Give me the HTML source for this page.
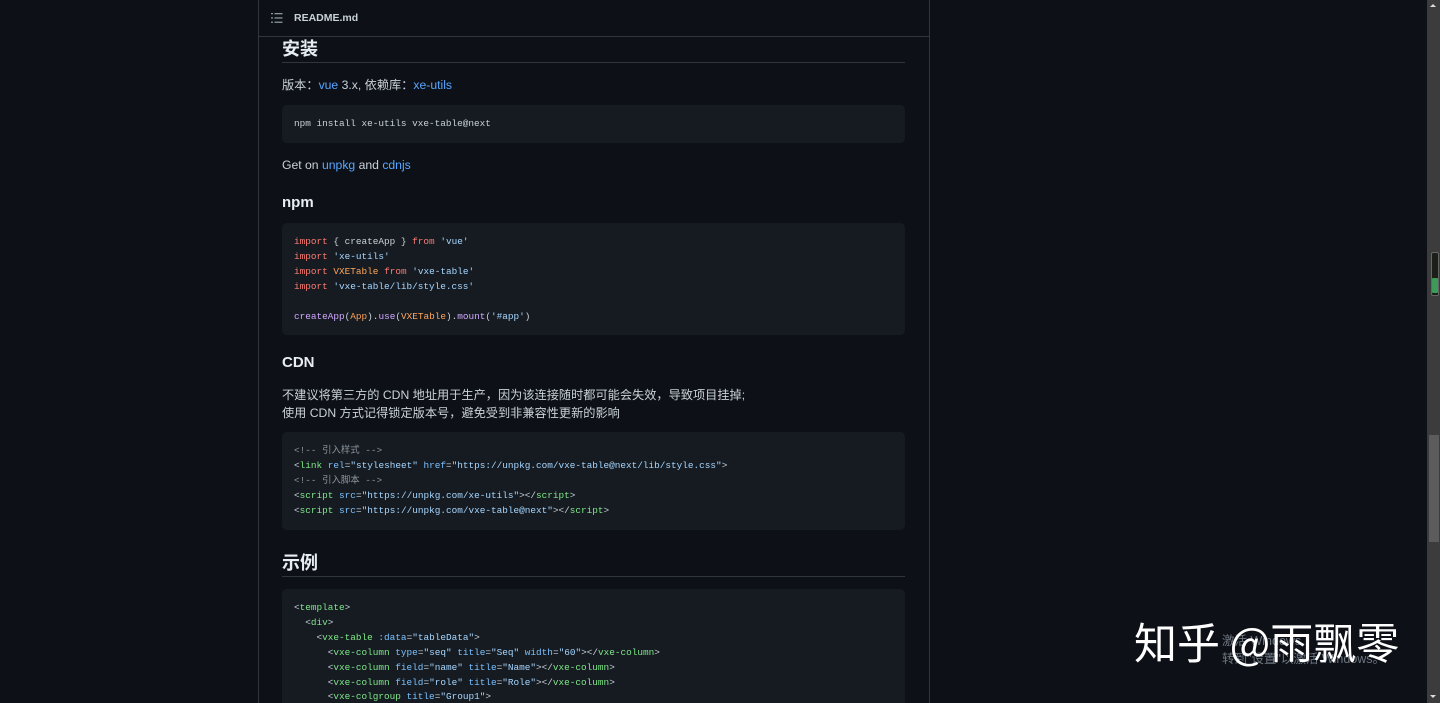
<!DOCTYPE html>
<html><head><meta charset="utf-8"><style>
html,body{margin:0;padding:0;overflow:hidden;height:703px;}
body{width:1440px;background:#0d1117;position:relative;font-family:"Liberation Sans","Noto Sans CJK SC",sans-serif;color:#c9d1d9;}
.box{position:absolute;left:258px;top:-2px;width:670px;height:705px;border-left:1px solid #30363d;border-right:1px solid #30363d;}
.hdr{position:absolute;left:259px;top:0;width:670px;height:36px;border-bottom:1px solid #30363d;}
.hdr .t{position:absolute;left:35px;top:12px;font-size:10.5px;font-weight:bold;color:#c9d1d9;}
.a{position:absolute;white-space:nowrap;}
.h1{font-size:18px;font-weight:bold;color:#e6edf3;}
.h2{font-size:15px;font-weight:bold;color:#e6edf3;}
.rule{position:absolute;left:282px;width:623px;height:1px;background:#30363d;}
.p{font-size:12.2px;color:#c9d1d9;}
.l{color:#58a6ff;}
.code{position:absolute;left:282px;width:623px;background:#161b22;border-radius:5px;}
pre{margin:0;position:absolute;left:12px;font-family:"Liberation Mono","Noto Sans CJK SC",monospace;font-size:9.4px;line-height:14.9px;color:#c9d1d9;}
.k{color:#ff7b72}.s{color:#a5d6ff}.f{color:#d2a8ff}.o{color:#ffa657}.c{color:#8b949e}.g{color:#7ee787}.at{color:#79c0ff}
.sb{position:absolute;left:1427px;top:0;width:13px;height:703px;background:#3c3c3c;}
</style></head><body>
<div class="box"></div>
<div class="hdr">
<svg style="position:absolute;left:12px;top:13px" width="12" height="10" viewBox="0 0 12 10"><g fill="#8b949e"><rect x="0" y="0" width="2" height="1.3"/><rect x="0" y="4.3" width="2" height="1.3"/><rect x="0" y="8.6" width="2" height="1.3"/><rect x="3.5" y="0" width="8" height="1.3"/><rect x="3.5" y="4.3" width="8" height="1.3"/><rect x="3.5" y="8.6" width="8" height="1.3"/></g></svg>
<div class="t">README.md</div></div>

<div class="a h1" style="left:282px;top:35px">安装</div>
<div class="rule" style="top:62px"></div>
<div class="a p" style="left:282px;top:75px">版本：<span class="l">vue</span> 3.x, 依赖库：<span class="l">xe-utils</span></div>
<div class="code" style="top:105px;height:38px"><pre style="top:12px">npm install xe-utils vxe-table@next</pre></div>
<div class="a p" style="left:282px;top:158px">Get on <span class="l">unpkg</span> and <span class="l">cdnjs</span></div>
<div class="a h2" style="left:282px;top:194px">npm</div>
<div class="code" style="top:223px;height:112px"><pre style="top:12px"><span class="k">import</span> { createApp } <span class="k">from</span> <span class="s">'vue'</span>
<span class="k">import</span> <span class="s">'xe-utils'</span>
<span class="k">import</span> <span class="o">VXETable</span> <span class="k">from</span> <span class="s">'vxe-table'</span>
<span class="k">import</span> <span class="s">'vxe-table/lib/style.css'</span>

<span class="f">createApp</span>(<span class="o">App</span>).<span class="f">use</span>(<span class="o">VXETable</span>).<span class="f">mount</span>(<span class="s">'#app'</span>)</pre></div>
<div class="a h2" style="left:282px;top:354px">CDN</div>
<div class="a p" style="left:282px;top:385px">不建议将第三方的 CDN 地址用于生产，因为该连接随时都可能会失效，导致项目挂掉;</div>
<div class="a p" style="left:282px;top:403px">使用 CDN 方式记得锁定版本号，避免受到非兼容性更新的影响</div>
<div class="code" style="top:432px;height:98px"><pre style="top:12px"><span class="c">&lt;!-- 引入样式 --&gt;</span>
&lt;<span class="g">link</span> <span class="at">rel</span>=<span class="s">"stylesheet"</span> <span class="at">href</span>=<span class="s">"https://unpkg.com/vxe-table@next/lib/style.css"</span>&gt;
<span class="c">&lt;!-- 引入脚本 --&gt;</span>
&lt;<span class="g">script</span> <span class="at">src</span>=<span class="s">"https://unpkg.com/xe-utils"</span>&gt;&lt;/<span class="g">script</span>&gt;
&lt;<span class="g">script</span> <span class="at">src</span>=<span class="s">"https://unpkg.com/vxe-table@next"</span>&gt;&lt;/<span class="g">script</span>&gt;</pre></div>
<div class="a h1" style="left:282px;top:549px">示例</div>
<div class="rule" style="top:576px"></div>
<div class="code" style="top:589px;height:130px"><pre style="top:12px">&lt;<span class="g">template</span>&gt;
  &lt;<span class="g">div</span>&gt;
    &lt;<span class="g">vxe-table</span> <span class="at">:data</span>=<span class="s">"tableData"</span>&gt;
      &lt;<span class="g">vxe-column</span> <span class="at">type</span>=<span class="s">"seq"</span> <span class="at">title</span>=<span class="s">"Seq"</span> <span class="at">width</span>=<span class="s">"60"</span>&gt;&lt;/<span class="g">vxe-column</span>&gt;
      &lt;<span class="g">vxe-column</span> <span class="at">field</span>=<span class="s">"name"</span> <span class="at">title</span>=<span class="s">"Name"</span>&gt;&lt;/<span class="g">vxe-column</span>&gt;
      &lt;<span class="g">vxe-column</span> <span class="at">field</span>=<span class="s">"role"</span> <span class="at">title</span>=<span class="s">"Role"</span>&gt;&lt;/<span class="g">vxe-column</span>&gt;
      &lt;<span class="g">vxe-colgroup</span> <span class="at">title</span>=<span class="s">"Group1"</span>&gt;</pre></div>

<div class="a" style="left:1222px;top:632px;font-size:12.5px;color:#6e7681;line-height:18px">激活 Windows<br>转到"设置"以激活 Windows。</div>
<div class="a" style="left:1134px;top:615px;font-size:43px;color:#fff;font-family:'Noto Sans CJK SC',sans-serif;line-height:52px">知乎 @雨飘零</div>

<div class="sb">
<div style="position:absolute;left:3px;top:4px;width:0;height:0;border-left:3px solid transparent;border-right:3px solid transparent;border-bottom:3px solid #ddd"></div>
<div style="position:absolute;left:4px;top:252px;width:6px;height:42px;border-radius:2px;background:#1a1f1a;border:1px solid #666"></div>
<div style="position:absolute;left:5px;top:278px;width:6px;height:15px;background:#3c9a5a;border-radius:1px"></div>
<div style="position:absolute;left:2px;top:435px;width:10px;height:107px;background:#5c5c5c"></div>
<div style="position:absolute;left:3px;top:695px;width:0;height:0;border-left:3px solid transparent;border-right:3px solid transparent;border-top:3px solid #ddd"></div>
</div>
</body></html>
